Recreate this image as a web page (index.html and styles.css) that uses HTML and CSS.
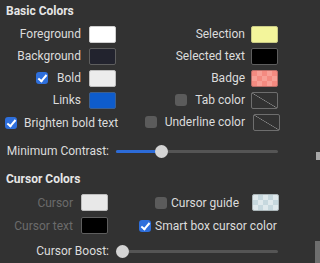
FILE: index.html
```html
<!DOCTYPE html>
<html lang="en">
<head>
    <meta charset="UTF-8">
    <meta name="viewport" content="width=device-width, initial-scale=1.0">
    <title>Colors</title>
    <link rel="stylesheet" href="styles.css">
</head>
<body>
    <div class="pane">
        <h2 class="section-title">Basic Colors</h2>
        <div class="color-grid">
            <span class="name">Foreground</span><span class="swatch sw-fg"></span>
            <span class="name">Selection</span><span class="swatch sw-sel"></span>

            <span class="name">Background</span><span class="swatch sw-bg"></span>
            <span class="name">Selected text</span><span class="swatch sw-black"></span>

            <span class="name"><span class="check on"></span>Bold</span><span class="swatch sw-bold"></span>
            <span class="name">Badge</span><span class="swatch sw-badge"></span>

            <span class="name">Links</span><span class="swatch sw-links"></span>
            <span class="name"><span class="check"></span>Tab color</span><span class="swatch sw-none"></span>

            <span class="name wide"><span class="check on"></span>Brighten bold text</span>
            <span class="name"><span class="check"></span>Underline color</span><span class="swatch sw-none"></span>
        </div>

        <div class="slider-row contrast">
            <span class="slider-label">Minimum Contrast:</span>
            <div class="track"><div class="fill" style="width: 45px"></div><div class="knob"></div></div>
            <span class="edge"></span>
        </div>

        <h2 class="section-title cursor-title">Cursor Colors</h2>
        <div class="cursor-grid">
            <span class="name dim">Cursor</span><span class="swatch sw-cursor"></span>
            <span class="name guide"><span class="check"></span>Cursor guide</span><span class="swatch sw-guide"></span>

            <span class="name dim">Cursor text</span><span class="swatch sw-black"></span>
            <span class="name smart"><span class="check on"></span>Smart box cursor color</span>
        </div>

        <div class="slider-row boost">
            <span class="slider-label">Cursor Boost:</span>
            <div class="track"><div class="fill" style="width: 0px"></div><div class="knob"></div></div>
            <span class="edge tall"></span>
        </div>
    </div>
</body>
</html>
```

FILE: styles.css
```css
body {
    margin: 0;
    background: #323232;
    font-family: Roboto, "Liberation Sans", sans-serif;
    font-size: 12px;
    color: #dcdcdc;
    overflow: hidden;
}
.pane {
    width: 320px;
    height: 263px;
    padding-top: 3px;
    box-sizing: border-box;
}
.section-title {
    margin: 0 0 0 6px;
    font-size: 12px;
    line-height: 16px;
    font-weight: 700;
    color: #e6e6e6;
}
.color-grid {
    display: grid;
    grid-template-columns: 81px 36px 128px 34px;
    grid-auto-rows: 22px;
    margin-top: 4px;
}
.cursor-grid {
    display: grid;
    grid-template-columns: 73px 35px 131px 40px;
    grid-auto-rows: 23px;
    margin-top: 4px;
}
.name {
    display: flex;
    align-items: center;
    justify-content: flex-end;
    white-space: nowrap;
}
.name.wide {
    grid-column: span 2;
    justify-content: flex-start;
    padding-left: 5px;
    margin-top: 1px;
}
.name.dim {
    color: #6b6b6b;
}
.name.smart {
    grid-column: span 2;
    justify-content: flex-start;
    padding-left: 31px;
}
.check {
    width: 12px;
    height: 12px;
    border-radius: 3px;
    background: #5b5b5b;
    margin-right: 9px;
    position: relative;
    flex: none;
}
.check.on {
    background: #2e6fdc;
}
.check.on::after {
    content: "";
    position: absolute;
    left: 4px;
    top: 1px;
    width: 3px;
    height: 7px;
    border: solid #fff;
    border-width: 0 2px 2px 0;
    transform: rotate(40deg);
}
.name.wide .check {
    margin-right: 7px;
}
.color-grid .name .check:not(.on) {
    margin-right: 8px;
}
.name.smart .check {
    margin-right: 4px;
}
.name.guide .check {
    margin-right: 4px;
}
.swatch {
    align-self: center;
    width: 25px;
    height: 15px;
    border: 1px solid #5e5e5e;
    border-radius: 2px;
    margin-left: 8px;
}
.color-grid .swatch:nth-child(4n) {
    margin-left: 6px;
}
.sw-fg { background: #ffffff; border-color: #cfcfcf; }
.sw-sel { background: #f3f59b; border-color: #c9ca86; }
.sw-bg { background: #22232e; }
.sw-black { background: #000000; }
.sw-bold { background: #ececec; border-color: #bdbdbd; }
.sw-links { background: #0e5ccc; border-color: #3d5f8e; }
.sw-badge {
    background-color: #f48a80;
    background-image: linear-gradient(45deg, #f7a096 25%, transparent 25%, transparent 75%, #f7a096 75%),
                      linear-gradient(45deg, #f7a096 25%, transparent 25%, transparent 75%, #f7a096 75%);
    background-size: 10px 10px;
    background-position: 0 0, 5px 5px;
    border-color: #b86c66;
}
.sw-none {
    background: linear-gradient(to top right, transparent calc(50% - 0.6px), #8a8a8a 50%, transparent calc(50% + 0.6px));
    border-color: #6e6e6e;
}
.sw-cursor { background: #e8e8e8; border-color: #bdbdbd; }
.sw-guide {
    background-color: #dfe9ec;
    background-image: linear-gradient(45deg, #c6d8de 25%, transparent 25%, transparent 75%, #c6d8de 75%),
                      linear-gradient(45deg, #c6d8de 25%, transparent 25%, transparent 75%, #c6d8de 75%);
    background-size: 10px 10px;
    background-position: 0 0, 5px 5px;
    border-color: #aab5b8;
}
.cursor-grid .sw-guide {
    margin-left: 13px;
}
.slider-row {
    display: flex;
    align-items: center;
    height: 22px;
}
.slider-row.contrast {
    margin-top: 7px;
}
.slider-row.boost {
    margin-top: 3px;
}
.slider-label {
    width: 109px;
    text-align: right;
    white-space: nowrap;
}
.track {
    position: relative;
    margin-left: 7px;
    width: 162px;
    height: 3px;
    border-radius: 2px;
    background: #555555;
}
.fill {
    height: 3px;
    border-radius: 2px;
    background: #2c6bd8;
}
.knob {
    position: absolute;
    top: -5px;
    left: 0;
    width: 13px;
    height: 13px;
    border-radius: 50%;
    background: #d4d4d4;
}
.contrast .knob {
    left: 39px;
}
.boost .knob {
    left: 0;
}
.edge {
    margin-left: auto;
    width: 4px;
    height: 8px;
    margin-top: 9px;
    background: #a8a8a8;
}
.edge.tall {
    width: 5px;
    height: 24px;
    margin-top: 4px;
    background: #6e6e6e;
}
.cursor-title {
    margin-top: 9px;
}
```
